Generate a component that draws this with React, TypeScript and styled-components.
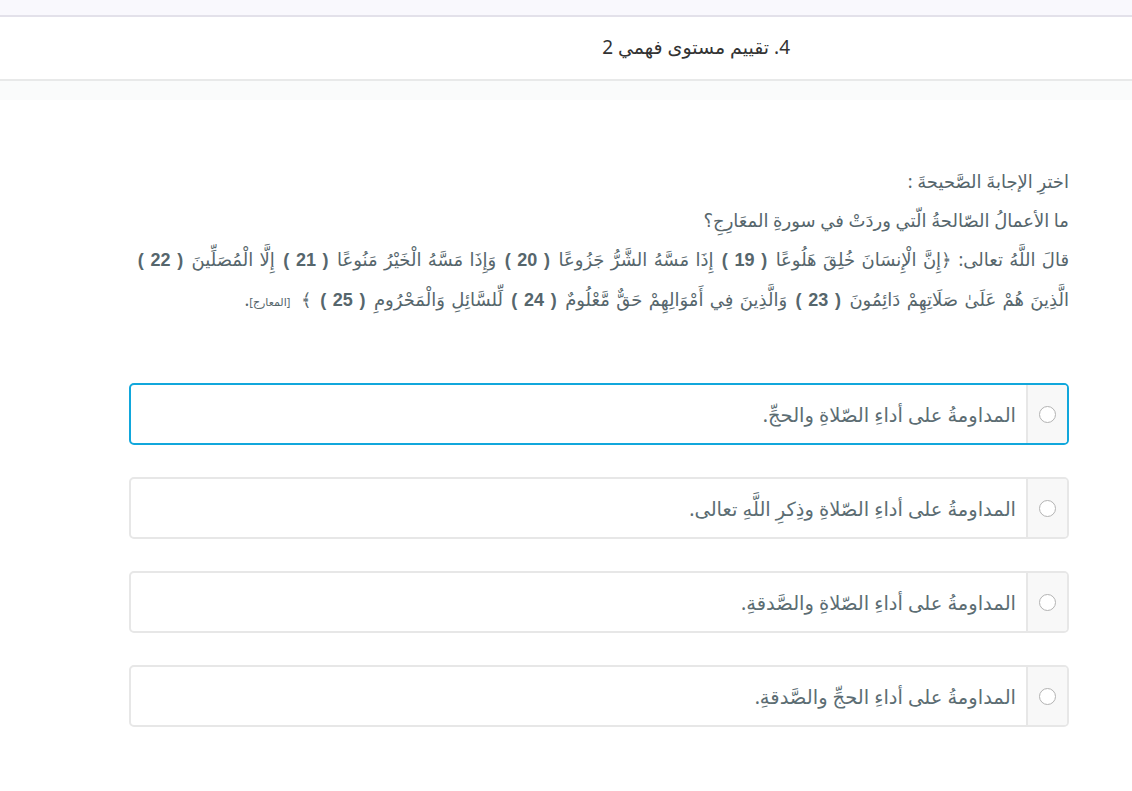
import React from 'react'
import styled, { createGlobalStyle } from 'styled-components'

const GlobalStyle = createGlobalStyle`
  html, body {
    margin: 0;
    padding: 0;
    background: #ffffff;
  }
  body {
    font-family: "Noto Sans", "DejaVu Sans", sans-serif;
    direction: rtl;
  }
`

const options = [
  'المداومةُ على أداءِ الصّلاةِ والحجِّ.',
  'المداومةُ على أداءِ الصّلاةِ وذِكرِ اللَّهِ تعالى.',
  'المداومةُ على أداءِ الصّلاةِ والصَّدقةِ.',
  'المداومةُ على أداءِ الحجِّ والصَّدقةِ.',
]

const Ayah = ({ n }: { n: number }) => <Num>( {n} )</Num>

const App = () => {
  return (
    <>
      <GlobalStyle />
      <Page>
        <TopBar />
        <Header>
          <Title>4. تقييم مستوى فهمي 2</Title>
        </Header>
        <Band />
        <Content>
          <Question>
            <Line>اخترِ الإجابةَ الصَّحيحةَ :</Line>
            <Line>ما الأعمالُ الصّالحةُ الّتي وردَتْ في سورةِ المعَارِجِ؟</Line>
            <Line verse>
              قالَ اللَّهُ تعالى: ﴿إِنَّ الْإِنسَانَ خُلِقَ هَلُوعًا <Ayah n={19} /> إِذَا مَسَّهُ الشَّرُّ جَزُوعًا <Ayah n={20} /> وَإِذَا مَسَّهُ الْخَيْرُ مَنُوعًا <Ayah n={21} /> إِلَّا الْمُصَلِّينَ <Ayah n={22} />
            </Line>
            <Line verse>
              الَّذِينَ هُمْ عَلَىٰ صَلَاتِهِمْ دَائِمُونَ <Ayah n={23} /> وَالَّذِينَ فِي أَمْوَالِهِمْ حَقٌّ مَّعْلُومٌ <Ayah n={24} /> لِّلسَّائِلِ وَالْمَحْرُومِ <Ayah n={25} /> ﴾ <Source>[المعارج]</Source>.
            </Line>
          </Question>
          <Options>
            {options.map((text, i) => (
              <Option key={i} active={i === 0}>
                <RadioCell>
                  <Radio />
                </RadioCell>
                <OptionText>{text}</OptionText>
              </Option>
            ))}
          </Options>
        </Content>
      </Page>
    </>
  )
}

const Page = styled.div`
  min-height: 791px;
  background: #ffffff;
`

const TopBar = styled.div`
  height: 15px;
  background: #f9f8fd;
  border-bottom: 2px solid #e3e1ea;
`

const Header = styled.div`
  height: 64px;
  box-sizing: border-box;
  display: flex;
  align-items: center;
  padding-right: 342px;
  padding-bottom: 3px;
  border-bottom: 2px solid #e8e9e9;
`

const Title = styled.div`
  font-family: "Noto Sans", "DejaVu Sans", sans-serif;
  font-size: 19px;
  color: #333333;
`

const Band = styled.div`
  height: 19px;
  background: #fafbfb;
`

const Content = styled.div`
  padding: 62px 63px 40px 129px;
`

const Question = styled.div`
  color: #56666c;
  font-size: 18px;
  line-height: 39px;
  text-align: right;
`

const Line = styled.div<{ verse?: boolean }>`
  white-space: nowrap;
  word-spacing: ${p => (p.verse ? '1.7px' : '0')};
`

const Num = styled.span`
  font-weight: 700;
  font-family: "Liberation Sans", "DejaVu Sans", sans-serif;
  font-size: 18px;
  margin: 0 2px;
`

const Source = styled.span`
  font-size: 11px;
  margin-right: 4px;
  word-spacing: 0;
`

const Options = styled.div`
  margin-top: 62px;
  display: flex;
  flex-direction: column;
  gap: 32px;
`

const Option = styled.div<{ active?: boolean }>`
  height: 62px;
  box-sizing: border-box;
  display: flex;
  align-items: stretch;
  border: 2px solid ${p => (p.active ? '#11a7dc' : '#e7e7e7')};
  border-radius: 5px;
  overflow: hidden;
  background: #ffffff;
`

const RadioCell = styled.div`
  width: 39px;
  flex: none;
  display: flex;
  align-items: center;
  justify-content: center;
  background: #f8f8f8;
  border-left: 2px solid #e7e7e7;
`

const Radio = styled.span`
  width: 17px;
  height: 17px;
  box-sizing: border-box;
  border-radius: 50%;
  border: 1px solid #b3b3b3;
  background: #ffffff;
`

const OptionText = styled.div`
  display: flex;
  align-items: center;
  padding-right: 10px;
  font-size: 19.5px;
  color: #5c6d73;
`

export default App
